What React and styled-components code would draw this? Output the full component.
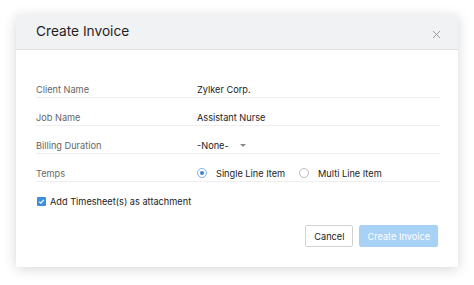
import React from "react";
import styled, { createGlobalStyle } from "styled-components";

const GlobalStyle = createGlobalStyle`
  html, body {
    margin: 0;
    padding: 0;
    background: #ffffff;
    font-family: Inter, "Noto Sans", sans-serif;
  }
  * {
    box-sizing: border-box;
  }
`;

const Page = styled.div`
  width: 474px;
  height: 285px;
  padding: 15px 16px 0 16px;
`;

const Modal = styled.div`
  width: 442px;
  height: 252px;
  background: #ffffff;
  box-shadow: 0 2px 12px rgba(0, 0, 0, 0.16);
  display: flex;
  flex-direction: column;
`;

const Header = styled.div`
  height: 35px;
  background: #f1f2f4;
  border-bottom: 1px solid #dedfe2;
  display: flex;
  align-items: center;
  justify-content: space-between;
  padding: 0 16px 0 20px;
`;

const Title = styled.h1`
  margin: 0;
  font-size: 13.7px;
  font-weight: 400;
  color: #1f1f1f;
  margin-top: -3px;
`;

const Close = styled.button`
  border: 0;
  background: none;
  padding: 0;
  width: 10px;
  height: 10px;
  margin-top: 5px;
  display: flex;
  cursor: pointer;
`;

const Body = styled.div`
  flex: 1;
  padding: 20px 18px 20px 20px;
  display: flex;
  flex-direction: column;
`;

const Row = styled.div`
  height: 28px;
  flex-shrink: 0;
  padding-top: 11px;
  display: flex;
  align-items: center;
  border-bottom: 1px solid #eeeeee;
  font-size: 9.2px;
`;

const Label = styled.div`
  width: 161px;
  color: #666666;
`;

const Value = styled.div`
  color: #222222;
  display: flex;
  align-items: center;
`;

const Caret = styled.span`
  margin-left: 11px;
  width: 0;
  height: 0;
  border-left: 3px solid transparent;
  border-right: 3px solid transparent;
  border-top: 3px solid #888888;
`;

const RadioOption = styled.label`
  display: flex;
  align-items: center;
  margin-right: 14px;
  color: #222222;
`;

const Radio = styled.span`
  width: 10px;
  height: 10px;
  border-radius: 50%;
  border: 1px solid ${(p) => (p.checked ? "#7fb3e8" : "#bdbdbd")};
  margin-right: 9px;
  display: flex;
  align-items: center;
  justify-content: center;
  &::after {
    content: "";
    width: 4px;
    height: 4px;
    border-radius: 50%;
    background: ${(p) => (p.checked ? "#3a86d8" : "transparent")};
  }
`;

const CheckRow = styled.label`
  display: flex;
  align-items: center;
  margin-top: 14px;
  padding-left: 1px;
  font-size: 9.2px;
  color: #222222;
`;

const Box = styled.span`
  width: 9px;
  height: 9px;
  border-radius: 1px;
  background: #3f8fde;
  margin-right: 4px;
  display: flex;
  align-items: center;
  justify-content: center;
`;

const Footer = styled.div`
  margin-top: auto;
  display: flex;
  justify-content: flex-end;
  gap: 6px;
  padding-right: 2px;
`;

const Button = styled.button`
  height: 22px;
  padding: 0 ${(p) => (p.primary ? "7px" : "8px")};
  font-family: inherit;
  font-size: 9.2px;
  border-radius: 2px;
  border: 1px solid ${(p) => (p.primary ? "#a7d1f5" : "#d3d3d3")};
  background: ${(p) => (p.primary ? "#a7d1f5" : "#ffffff")};
  color: ${(p) => (p.primary ? "#ffffff" : "#222222")};
`;

const fields = [
  { label: "Client Name", value: "Zylker Corp." },
  { label: "Job Name", value: "Assistant Nurse" },
];

export default function App() {
  return (
    <>
      <GlobalStyle />
      <Page>
        <Modal>
          <Header>
            <Title>Create Invoice</Title>
            <Close aria-label="Close">
              <svg width="9" height="9" viewBox="0 0 9 9">
                <path d="M1 1L8 8M8 1L1 8" stroke="#9a9a9a" strokeWidth="1" />
              </svg>
            </Close>
          </Header>
          <Body>
            {fields.map((f) => (
              <Row key={f.label}>
                <Label>{f.label}</Label>
                <Value>{f.value}</Value>
              </Row>
            ))}
            <Row>
              <Label>Billing Duration</Label>
              <Value>
                -None-
                <Caret />
              </Value>
            </Row>
            <Row>
              <Label>Temps</Label>
              <Value>
                <RadioOption>
                  <Radio checked />
                  Single Line Item
                </RadioOption>
                <RadioOption>
                  <Radio />
                  Multi Line Item
                </RadioOption>
              </Value>
            </Row>
            <CheckRow>
              <Box>
                <svg width="7" height="7" viewBox="0 0 7 7">
                  <path d="M1.2 3.6L2.8 5.1L5.8 1.8" stroke="#fff" strokeWidth="1.2" fill="none" />
                </svg>
              </Box>
              Add Timesheet(s) as attachment
            </CheckRow>
            <Footer>
              <Button>Cancel</Button>
              <Button primary>Create Invoice</Button>
            </Footer>
          </Body>
        </Modal>
      </Page>
    </>
  );
}
